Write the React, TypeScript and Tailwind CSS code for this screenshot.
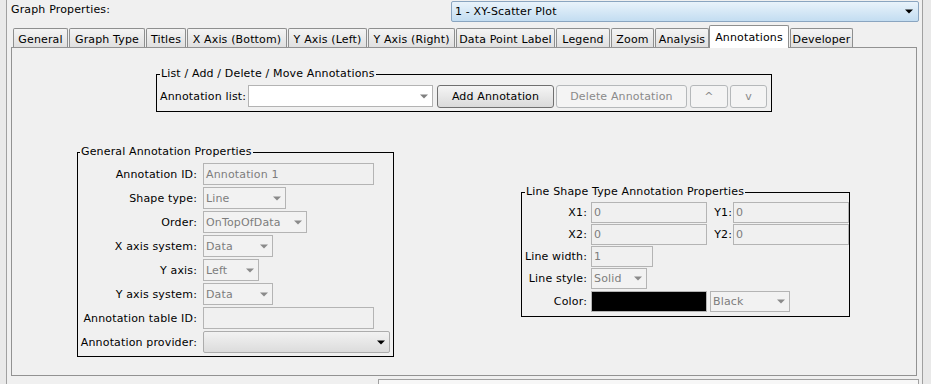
import React from "react";

const Tri = ({ color }: { color: string }) => (
  <svg width="8" height="5" viewBox="0 0 8 5" className="shrink-0">
    <path d="M0 0.5H8L4 4.5Z" fill={color} />
  </svg>
);

const Field = ({ w, text }: { w: string; text?: string }) => (
  <div className={`${w} h-full border border-[#b4b4b4] bg-[#f0f0f0] pl-[2px] flex items-center text-[#7d7d7d]`}>
    {text}
  </div>
);

const DCombo = ({ w, text }: { w: string; text: string }) => (
  <div className={`${w} h-full border border-[#b4b4b4] bg-[#f2f2f2] pl-[2px] pr-[4px] flex items-center justify-between text-[#7d7d7d]`}>
    <span>{text}</span>
    <Tri color="#8a8a8a" />
  </div>
);

const tabs: { label: string; w: string; ml: string; sel?: boolean }[] = [
  { label: "General", w: "w-[55px]", ml: "ml-0" },
  { label: "Graph Type", w: "w-[76px]", ml: "ml-[1px]" },
  { label: "Titles", w: "w-[40px]", ml: "ml-[1px]" },
  { label: "X Axis (Bottom)", w: "w-[100px]", ml: "ml-[1px]" },
  { label: "Y Axis (Left)", w: "w-[79px]", ml: "ml-[1px]" },
  { label: "Y Axis (Right)", w: "w-[87px]", ml: "ml-[1px]" },
  { label: "Data Point Label", w: "w-[99px]", ml: "ml-[1px]" },
  { label: "Legend", w: "w-[54px]", ml: "ml-[1px]" },
  { label: "Zoom", w: "w-[43px]", ml: "ml-[1px]" },
  { label: "Analysis", w: "w-[54px]", ml: "ml-[1px]" },
  { label: "Annotations", w: "w-[80px]", ml: "ml-0", sel: true },
  { label: "Developer", w: "w-[63px]", ml: "ml-[1px]" },
];

const Row2 = ({ label, children }: { label: string; children: React.ReactNode }) => (
  <div className="flex h-[22px] items-stretch">
    <div className="w-[119px] text-right flex items-center justify-end">{label}</div>
    <div className="ml-[6px] flex h-full">{children}</div>
  </div>
);

const Row3 = ({ label, children }: { label: string; children: React.ReactNode }) => (
  <div className="flex h-[21px] items-stretch">
    <div className="w-[65px] text-right flex items-center justify-end">{label}</div>
    <div className="ml-[4px] flex h-full items-stretch">{children}</div>
  </div>
);

export default function App() {
  return (
    <div className="w-[931px] h-[384px] bg-[#f0f0f0] flex overflow-hidden font-['DejaVu_Sans',sans-serif] text-[11px] tracking-[0.15px] leading-[13px] text-black">
      <div className="w-[7px] h-full bg-[#e9e9e9] border-r border-[#a0a0a0]" />
      <div className="w-[915px] h-full flex flex-col">
        {/* top row */}
        <div className="h-[22px] flex justify-between pl-[4px] pr-[3px]">
          <div className="pt-[3px]">Graph Properties:</div>
          <div className="mt-[1px] w-[468px] h-[21px] border border-[#8aa5c0] rounded-[2px] bg-gradient-to-b from-[#e9f3fb] to-[#c3ddf1] flex items-center justify-between pl-[3px] pr-[5px]">
            <span>1 - XY-Scatter Plot</span>
            <Tri color="#000" />
          </div>
        </div>
        {/* tabs */}
        <div className="mt-[3px] h-[22px] flex items-end pl-[6px] relative z-10">
          {tabs.map((t) =>
            t.sel ? (
              <div
                key={t.label}
                className={`${t.w} ${t.ml} h-[23px] -mb-[1px] bg-white border border-b-0 border-[#8e8f8f] rounded-t-[2px] flex items-center justify-center`}
              >
                {t.label}
              </div>
            ) : (
              <div
                key={t.label}
                className={`${t.w} ${t.ml} h-[19px] bg-gradient-to-b from-[#f4f4f4] to-[#e0e0e0] border border-b-0 border-[#8e8f8f] rounded-t-[2px] flex items-center justify-center pt-[2px]`}
              >
                {t.label}
              </div>
            )
          )}
        </div>
        {/* panel */}
        <div className="ml-[4px] w-[906px] h-[329px] border border-[#929292] flex flex-col">
          {/* group 1 */}
          <div className="relative mt-[26px] ml-[144px] w-[616px] h-[38px] border border-black pt-[10px] pl-[3px]">
            <span className="absolute -top-[8px] left-[3px] px-[1px] bg-[#f0f0f0]">
              List / Add / Delete / Move Annotations
            </span>
            <div className="flex items-start">
              <div className="w-[88px] h-[22px] flex items-center">Annotation list:</div>
              <div className="w-[185px] h-[22px] bg-white border border-[#b3b3b3] flex items-center justify-end pr-[4px]">
                <Tri color="#808080" />
              </div>
              <div className="ml-[4px] w-[117px] h-[23px] border border-[#707070] rounded-[3px] bg-gradient-to-b from-[#f5f5f5] to-[#dadada] flex items-center justify-center">
                Add Annotation
              </div>
              <div className="ml-[2px] w-[131px] h-[23px] border border-[#b5b8ba] rounded-[3px] bg-[#f4f4f4] flex items-center justify-center text-[#8a8a8a]">
                Delete Annotation
              </div>
              <div className="ml-[3px] w-[38px] h-[23px] border border-[#b5b8ba] rounded-[3px] bg-[#f4f4f4] flex items-center justify-center text-[#8a8a8a]">
                ^
              </div>
              <div className="ml-[2px] w-[37px] h-[23px] border border-[#b5b8ba] rounded-[3px] bg-[#f4f4f4] flex items-center justify-center text-[#8a8a8a]">
                v
              </div>
            </div>
          </div>
          <div className="flex items-start mt-[40px]">
            {/* group 2 */}
            <div className="relative ml-[65px] w-[317px] h-[205px] border border-black pt-[10px] flex flex-col gap-[2px]">
              <span className="absolute -top-[8px] left-[2px] px-[1px] bg-[#f0f0f0]">
                General Annotation Properties
              </span>
              <Row2 label="Annotation ID:">
                <Field w="w-[171px]" text="Annotation 1" />
              </Row2>
              <Row2 label="Shape type:">
                <DCombo w="w-[83px]" text="Line" />
              </Row2>
              <Row2 label="Order:">
                <DCombo w="w-[104px]" text="OnTopOfData" />
              </Row2>
              <Row2 label="X axis system:">
                <DCombo w="w-[70px]" text="Data" />
              </Row2>
              <Row2 label="Y axis:">
                <DCombo w="w-[56px]" text="Left" />
              </Row2>
              <Row2 label="Y axis system:">
                <DCombo w="w-[70px]" text="Data" />
              </Row2>
              <Row2 label="Annotation table ID:">
                <Field w="w-[171px]" />
              </Row2>
              <Row2 label="Annotation provider:">
                <div className="w-[187px] h-full border border-[#acacac] rounded-[2px] bg-gradient-to-b from-[#f2f2f2] to-[#dcdcdc] flex items-center justify-end pr-[4px]">
                  <Tri color="#000" />
                </div>
              </Row2>
            </div>
            {/* group 3 */}
            <div className="relative ml-[127px] mt-[40px] w-[329px] h-[125px] border border-black pt-[9px] flex flex-col gap-[1px]">
              <span className="absolute -top-[8px] left-[3px] px-[1px] bg-[#f0f0f0]">
                Line Shape Type Annotation Properties
              </span>
              <Row3 label="X1:">
                <Field w="w-[116px]" text="0" />
                <div className="w-[24px] ml-[1px] flex items-center justify-end">Y1:</div>
                <div className="ml-[1px] flex">
                  <Field w="w-[116px]" text="0" />
                </div>
              </Row3>
              <Row3 label="X2:">
                <Field w="w-[116px]" text="0" />
                <div className="w-[24px] ml-[1px] flex items-center justify-end">Y2:</div>
                <div className="ml-[1px] flex">
                  <Field w="w-[116px]" text="0" />
                </div>
              </Row3>
              <Row3 label="Line width:">
                <Field w="w-[62px]" text="1" />
              </Row3>
              <Row3 label="Line style:">
                <DCombo w="w-[56px]" text="Solid" />
              </Row3>
              <div className="mt-[1px] flex h-[21px] items-stretch">
                <div className="w-[65px] text-right flex items-center justify-end">Color:</div>
                <div className="ml-[4px] w-[116px] h-full bg-black border border-[#b4b4b4]" />
                <div className="ml-[3px] flex h-full">
                  <DCombo w="w-[80px]" text="Black" />
                </div>
              </div>
            </div>
          </div>
        </div>
        {/* bottom box */}
        <div className="ml-[371px] mt-[3px] w-[541px] flex-1 border border-b-0 border-[#a0a0a0] bg-[#f7f7f7]" />
      </div>
      <div className="w-[9px] h-full bg-[#e9e9e9] border-l border-[#a0a0a0]" />
    </div>
  );
}
